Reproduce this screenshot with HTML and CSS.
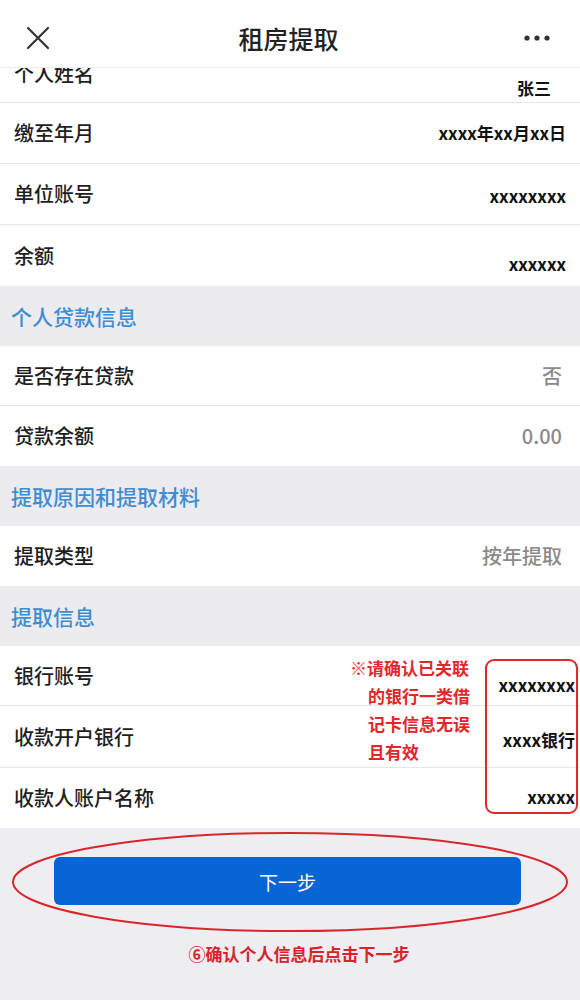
FILE: index.html
```html
<!DOCTYPE html>
<html lang="zh-CN">
<head>
<meta charset="utf-8">
<title>租房提取</title>
<link rel="stylesheet" href="styles.css">
</head>
<body>
<div class="page">
  <header class="topbar">
    <svg class="icon-close" width="24" height="24" viewBox="0 0 24 24"><path d="M2 2 L22 22 M22 2 L2 22" stroke="#333" stroke-width="2.2" stroke-linecap="round" fill="none"/></svg>
    <div class="title">租房提取</div>
    <svg class="icon-more" width="28" height="8" viewBox="0 0 28 8"><circle cx="4" cy="4" r="2.6" fill="#333"/><circle cx="14" cy="4" r="2.6" fill="#333"/><circle cx="24" cy="4" r="2.6" fill="#333"/></svg>
  </header>

  <div class="row row-first">
    <span class="label label-clip">个人姓名</span>
    <span class="val-bold val-name">张三</span>
  </div>
  <div class="row">
    <span class="label">缴至年月</span>
    <span class="val-bold">xxxx年xx月xx日</span>
  </div>
  <div class="row">
    <span class="label">单位账号</span>
    <span class="val-bold val-low1">xxxxxxxx</span>
  </div>
  <div class="row row-last">
    <span class="label">余额</span>
    <span class="val-bold val-low2">xxxxxx</span>
  </div>

  <div class="section">个人贷款信息</div>
  <div class="row row-60">
    <span class="label">是否存在贷款</span>
    <span class="val-gray">否</span>
  </div>
  <div class="row row-60 row-last">
    <span class="label">贷款余额</span>
    <span class="val-gray">0.00</span>
  </div>

  <div class="section">提取原因和提取材料</div>
  <div class="row row-60 row-last">
    <span class="label">提取类型</span>
    <span class="val-gray">按年提取</span>
  </div>

  <div class="section">提取信息</div>
  <div class="row row-60 row-bank">
    <span class="label">银行账号</span>
    <span class="val-bold val-bank1">xxxxxxxx</span>
  </div>
  <div class="row row-62 row-bank">
    <span class="label">收款开户银行</span>
    <span class="val-bold val-bank2">xxxx银行</span>
  </div>
  <div class="row row-60 row-bank row-last">
    <span class="label">收款人账户名称</span>
    <span class="val-bold val-bank3">xxxxx</span>
  </div>

  <div class="footer">
    <button class="btn-next">下一步</button>
    <div class="hint">⑥确认个人信息后点击下一步</div>
  </div>

  <div class="note">
    <div class="note-line note-first">※请确认已关联</div>
    <div class="note-line">的银行一类借</div>
    <div class="note-line">记卡信息无误</div>
    <div class="note-line">且有效</div>
  </div>
  <div class="red-box"></div>
  <svg class="ellipse" width="560" height="104" viewBox="0 0 560 104"><ellipse cx="280" cy="52" rx="277" ry="49" fill="none" stroke="#d9262a" stroke-width="2"/></svg>
</div>
</body>
</html>
```

FILE: styles.css
```css
* { box-sizing: border-box; }
html, body { margin: 0; padding: 0; }
body {
  background: #ededf2;
  font-family: "Noto Sans CJK SC", "Noto Sans", sans-serif;
  color: #222;
}
.page {
  position: relative;
  width: 580px;
  min-height: 1000px;
  background: #ededf2;
  overflow: hidden;
}
.topbar {
  height: 68px;
  background: #fff;
  display: flex;
  align-items: center;
  justify-content: space-between;
  padding: 0 29px 0 26px;
  border-bottom: 1px solid #eeeeee;
  position: relative;
  z-index: 2;
}
.icon-close { display: block; margin-top: 8px; }
.icon-more { display: block; margin-top: 8px; }
.title {
  font-size: 25px;
  font-weight: 500;
  color: #222;
  margin-top: 8px;
  margin-left: 4px;
}
.row {
  height: 61px;
  background: #fff;
  display: flex;
  align-items: center;
  justify-content: space-between;
  padding: 0 14px 0 14px;
  border-bottom: 1px solid #e6e6e9;
}
.row-60 { height: 60px; }
.row-62 { height: 62px; }
.row-last { border-bottom: none; }
.row-first {
  height: 35px;
  align-items: flex-start;
  overflow: hidden;
  padding-right: 29px;
}
.label {
  font-size: 20px;
  font-weight: 500;
  line-height: 28px;
  color: #1e1e1e;
}
.label-clip { margin-top: -8px; }
.val-bold {
  font-size: 17px;
  font-weight: 700;
  color: #111;
  line-height: 24px;
}
.val-name { margin-top: 8px; }
.val-low1 { margin-top: 4px; }
.val-low2 { margin-top: 16px; }
.val-gray {
  font-size: 20px;
  font-weight: 500;
  color: #8a8a8a;
  line-height: 28px;
  padding-right: 4px;
}
.row-bank { padding-right: 5px; }
.val-bank1 { margin-top: 18px; }
.val-bank2 { margin-top: 6px; }
.val-bank3 { margin-top: -2px; }
.section {
  height: 60px;
  display: flex;
  align-items: center;
  padding-left: 11px;
  font-size: 21px;
  font-weight: 500;
  color: #3d8dd1;
  background: #ebebf0;
}
.footer {
  display: flex;
  flex-direction: column;
  align-items: flex-start;
  padding-top: 29px;
}
.btn-next {
  margin-left: 54px;
  width: 467px;
  height: 48px;
  border: none;
  border-radius: 6px;
  background: #0866d4;
  color: #fff;
  font-family: "Noto Sans CJK SC", sans-serif;
  font-size: 19px;
  padding: 0;
}
.hint {
  align-self: center;
  margin-top: 37px;
  font-size: 17px;
  font-weight: 700;
  color: #d9232b;
  line-height: 24px;
  margin-left: 18px;
}
.note {
  position: absolute;
  left: 368px;
  top: 654px;
  font-size: 17px;
  font-weight: 700;
  color: #e3262a;
  line-height: 28px;
}
.note-first { margin-left: -18px; }
.red-box {
  position: absolute;
  left: 485px;
  top: 659px;
  width: 93px;
  height: 155px;
  border: 2px solid #e3262a;
  border-radius: 9px;
}
.ellipse {
  position: absolute;
  left: 10px;
  top: 830px;
}
```
